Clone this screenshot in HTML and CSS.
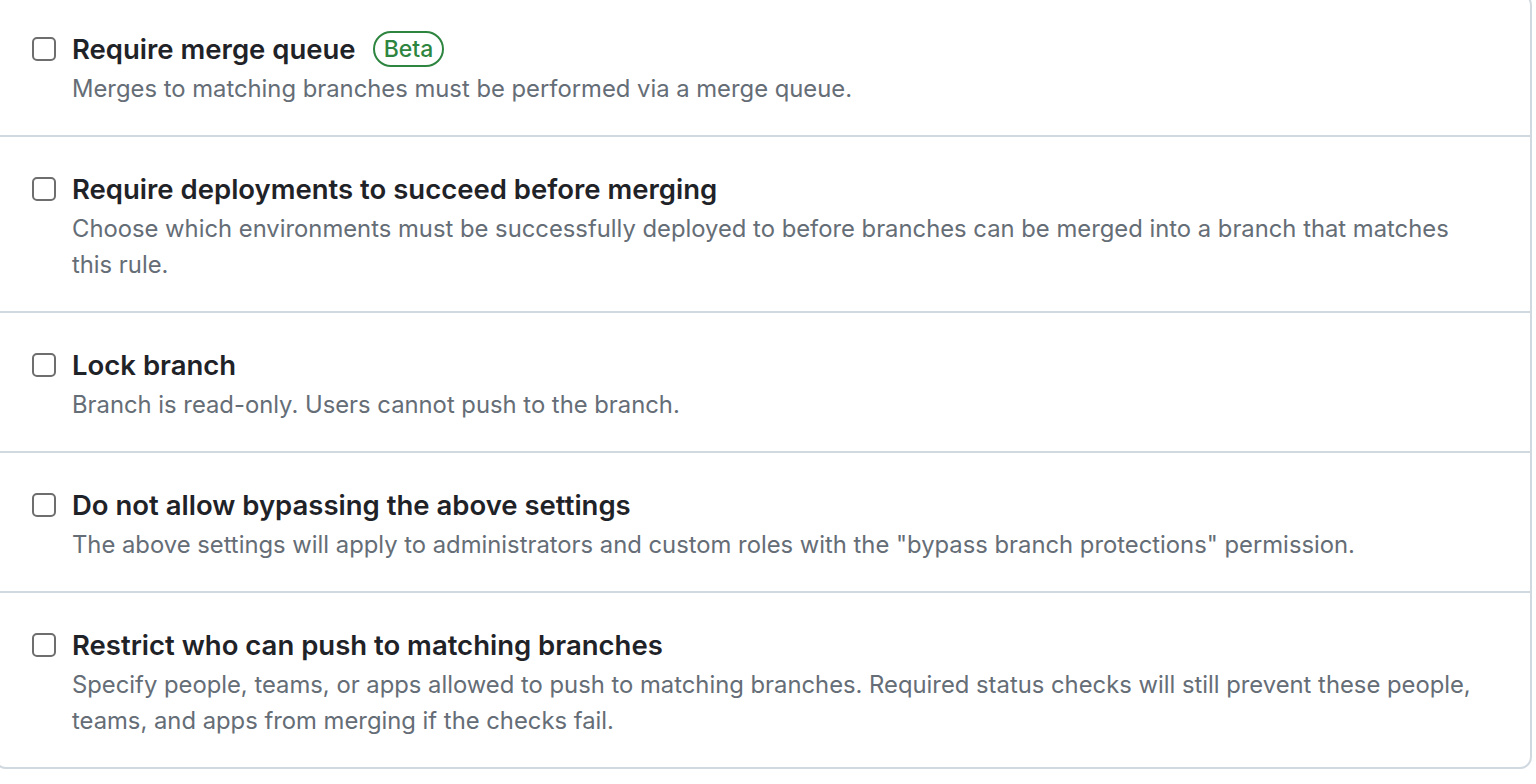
FILE: index.html
```html
<!DOCTYPE html>
<html>
<head>
<meta charset="utf-8">
<link rel="stylesheet" href="styles.css">
</head>
<body>
<div class="box">
  <div class="row first">
    <span class="cb"></span>
    <div class="text">
      <div class="title">Require merge queue <span class="badge">Beta</span></div>
      <div class="desc">Merges to matching branches must be performed via a merge queue.</div>
    </div>
  </div>
  <div class="row">
    <span class="cb"></span>
    <div class="text">
      <div class="title">Require deployments to succeed before merging</div>
      <div class="desc">Choose which environments must be successfully deployed to before branches can be merged into a branch that matches this rule.</div>
    </div>
  </div>
  <div class="row">
    <span class="cb"></span>
    <div class="text">
      <div class="title">Lock branch</div>
      <div class="desc">Branch is read-only. Users cannot push to the branch.</div>
    </div>
  </div>
  <div class="row">
    <span class="cb"></span>
    <div class="text">
      <div class="title">Do not allow bypassing the above settings</div>
      <div class="desc">The above settings will apply to administrators and custom roles with the "bypass branch protections" permission.</div>
    </div>
  </div>
  <div class="row">
    <span class="cb"></span>
    <div class="text">
      <div class="title">Restrict who can push to matching branches</div>
      <div class="desc">Specify people, teams, or apps allowed to push to matching branches. Required status checks will still prevent these people, teams, and apps from merging if the checks fail.</div>
    </div>
  </div>
</div>
</body>
</html>
```
FILE: styles.css
```css
html, body {
  margin: 0;
  padding: 0;
  background: #ffffff;
  overflow: hidden;
}
body {
  font-family: Inter, "Noto Sans", "Liberation Sans", sans-serif;
  -webkit-font-smoothing: antialiased;
}
.box {
  margin-left: -6px;
  margin-top: -7px;
  width: 1538px;
  box-sizing: border-box;
  border: 2px solid #d1d9e0;
  border-radius: 12px;
}
.row {
  display: flex;
  align-items: flex-start;
  gap: 16px;
  padding: 32px 50px 28px 36px;
  border-top: 2px solid #d1d9e0;
}
.row.first {
  border-top: none;
  padding-top: 34px;
}
.cb {
  flex: none;
  width: 24px;
  height: 24px;
  box-sizing: border-box;
  border: 2px solid #6e6e6e;
  border-radius: 5px;
  margin-top: 8px;
  background: #fff;
}
.text {
  flex: 1;
  min-width: 0;
}
.title {
  font-size: 27.5px;
  line-height: 40px;
  font-weight: 600;
  color: #1f2328;
  display: flex;
  align-items: center;
}
.badge {
  display: inline-flex;
  align-items: center;
  height: 36px;
  box-sizing: border-box;
  padding: 0 9px;
  margin-left: 17px;
  border: 2px solid #2e8540;
  border-radius: 18px;
  color: #2e8540;
  font-size: 23px;
  font-weight: 500;
}
.desc {
  margin-top: 2px;
  font-size: 23.8px;
  line-height: 36px;
  color: #656d76;
}
```
